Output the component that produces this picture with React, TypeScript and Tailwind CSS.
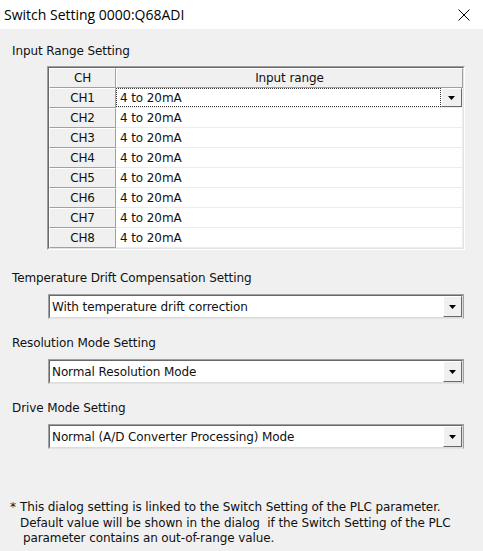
import React from "react";

const CHANNELS = ["CH1", "CH2", "CH3", "CH4", "CH5", "CH6", "CH7", "CH8"];

function DropArrow() {
  return (
    <svg width="7" height="4" viewBox="0 0 7 4" className="block">
      <path d="M0 0H7L3.5 4Z" fill="#000" />
    </svg>
  );
}

function DropButton({ className = "" }: { className?: string }) {
  return (
    <div
      className={
        "flex items-center justify-center bg-[#f0f0f0] border border-t-white border-l-white border-b-[#696969] border-r-[#696969] " +
        className
      }
    >
      <DropArrow />
    </div>
  );
}

function ComboBox({ value }: { value: string }) {
  return (
    <div className="ml-[48px] w-[416px] h-[25px] border border-t-[#a0a0a0] border-l-[#a0a0a0] border-r-[#a0a0a0] border-b-[#e3e3e3]">
      <div className="h-full flex bg-white border border-t-[#696969] border-l-[#696969] border-r-[#dcdcdc] border-b-[#dcdcdc]">
        <div className="flex-1 flex items-center pl-[2px] leading-none">{value}</div>
        <DropButton className="w-[19px] h-full" />
      </div>
    </div>
  );
}

function Label({ text, className = "" }: { text: string; className?: string }) {
  return <div className={"pl-[12px] h-[16px] leading-[16px] " + className}>{text}</div>;
}

export default function App() {
  return (
    <div className="w-[483px] h-[551px] bg-[#f0f0f0] flex flex-col overflow-hidden text-[12px] tracking-[-0.1px] text-[#111] font-['DejaVu_Sans',sans-serif]">
      {/* title bar */}
      <div className="h-[29px] shrink-0 bg-white flex items-center justify-between pl-[4px] pr-[13px]">
        <span className="font-['Open_Sans',sans-serif] text-[14px] tracking-normal text-black">
          Switch Setting 0000:Q68ADI
        </span>
        <svg width="12" height="12" viewBox="0 0 12 12" className="block">
          <path d="M0.5 0.5L11.5 11.5M11.5 0.5L0.5 11.5" stroke="#000" strokeWidth="1" />
        </svg>
      </div>

      <Label text="Input Range Setting" className="mt-[14px]" />

      {/* channel grid */}
      <div className="ml-[47px] mt-[7px] w-[418px] border border-t-[#a0a0a0] border-l-[#a0a0a0] border-r-white border-b-white">
        <div className="border border-t-[#696969] border-l-[#696969] border-r-[#e3e3e3] border-b-[#e3e3e3] bg-[#f0f0f0]">
          <div className="flex h-[20px]">
            <div className="w-[67px] flex items-center justify-center border border-t-white border-l-white border-r-[#a0a0a0] border-b-[#a0a0a0]">
              CH
            </div>
            <div className="flex-1 flex items-center justify-center border border-t-white border-l-white border-r-[#a0a0a0] border-b-[#a0a0a0]">
              Input range
            </div>
          </div>
          {CHANNELS.map((ch, i) => (
            <div key={ch} className="flex h-[20px]">
              <div className="w-[67px] flex items-center justify-center border border-t-white border-l-white border-r-[#a0a0a0] border-b-[#a0a0a0]">
                {ch}
              </div>
              {i === 0 ? (
                <div className="flex-1 flex bg-white border-b border-r border-[#ececec]">
                  <div className="flex-1 flex items-center pl-[3px] border border-dotted border-[#333]">
                    4 to 20mA
                  </div>
                  <DropButton className="w-[21px] h-full" />
                </div>
              ) : (
                <div className="flex-1 flex items-center pl-[4px] bg-white border-b border-r border-[#ececec]">
                  4 to 20mA
                </div>
              )}
            </div>
          ))}
        </div>
      </div>

      <Label text="Temperature Drift Compensation Setting" className="mt-[20px]" />
      <div className="mt-[8px]">
        <ComboBox value="With temperature drift correction" />
      </div>

      <Label text="Resolution Mode Setting" className="mt-[16px]" />
      <div className="mt-[8px]">
        <ComboBox value="Normal Resolution Mode" />
      </div>

      <Label text="Drive Mode Setting" className="mt-[16px]" />
      <div className="mt-[8px]">
        <ComboBox value="Normal (A/D Converter Processing) Mode" />
      </div>

      {/* footnote */}
      <div className="mt-[51px] leading-[15.5px]">
        <div className="flex">
          <span className="w-[20px] pl-[10px]">*</span>
          <span>This dialog setting is linked to the Switch Setting of the PLC parameter.</span>
        </div>
        <div className="pl-[20px] whitespace-pre">
          Default value will be shown in the dialog  if the Switch Setting of the PLC
        </div>
        <div className="pl-[23px]">parameter contains an out-of-range value.</div>
      </div>
    </div>
  );
}
